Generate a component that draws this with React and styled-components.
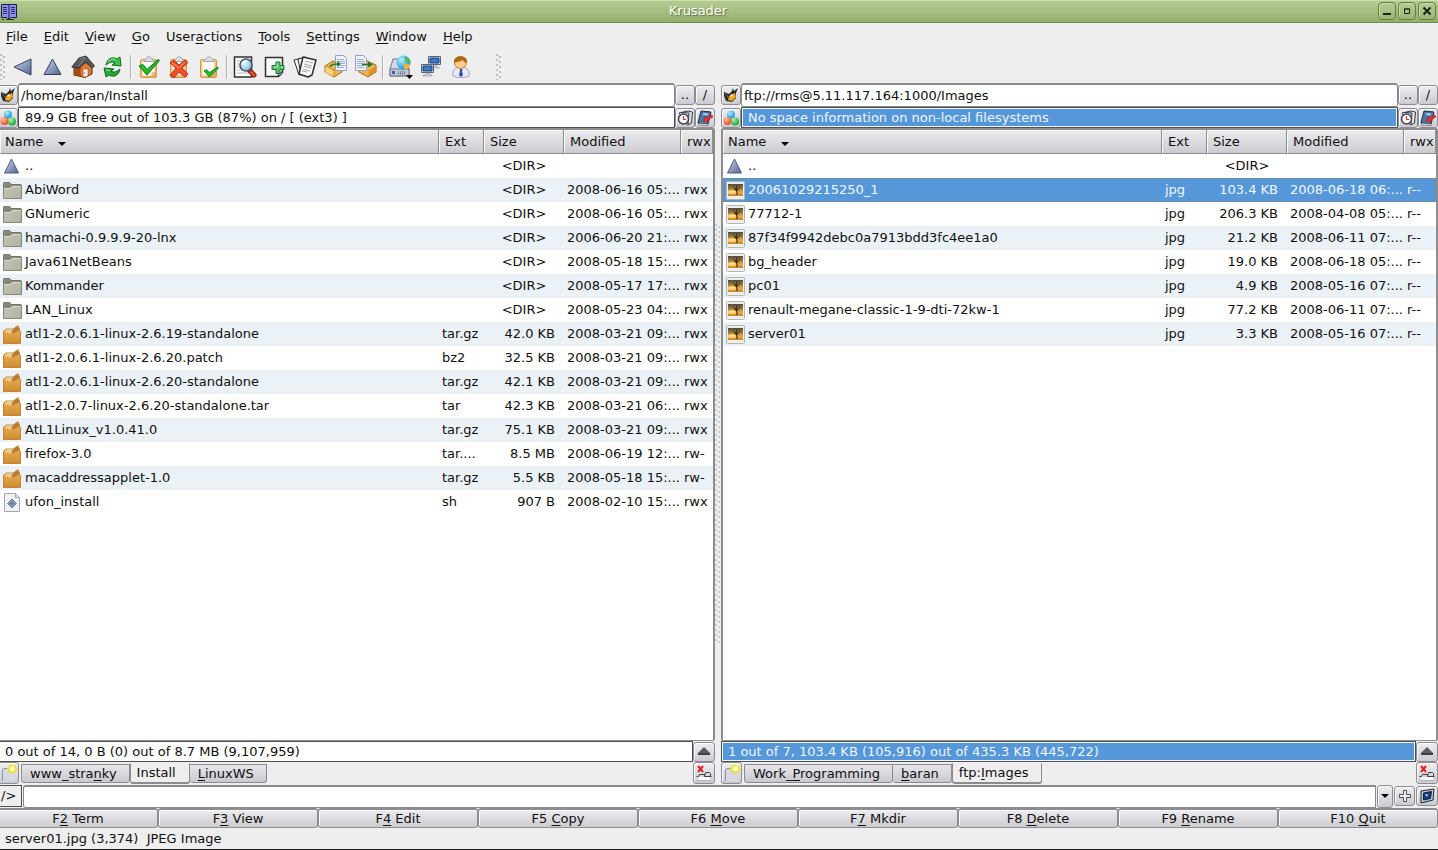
import React, { useState } from 'react';
import styled, { createGlobalStyle } from 'styled-components';

const GlobalStyle = createGlobalStyle`
* { box-sizing: border-box; }
body {
  margin: 0;
  background: #eeeeee;
  color: #101010;
  overflow-x: hidden;
}
body, button, input, table {
  font-family: "DejaVu Sans", sans-serif;
  font-size: 13px;
}
button { color: inherit; padding: 0; }
svg { display: block; }
`

const Window = styled.div`
display: flex;
flex-direction: column;
min-height: 100vh;
overflow: hidden;
border-bottom: solid 1px #202020;
`

/* title bar */

const TitleBar = styled.header`
display: flex;
align-items: center;
height: 23px;
padding: 0 2px 1px 1px;
background: linear-gradient(#b4ca92, #a6be82 50%, #93ad6c);
border-top: solid 1px #cbe0ab;
border-bottom: solid 1px #6d8a48;
color: white;
`

const Title = styled.h1`
flex: 1;
margin: 0;
font-size: 13px;
font-weight: normal;
line-height: 20px;
text-align: center;
text-shadow: 1px 1px 1px #5c7440;
`

const TitleButtons = styled.div`
display: flex;
gap: 2px;
`

const TitleButton = styled.button`
display: flex;
align-items: center;
justify-content: center;
width: 18px;
height: 18px;
border: solid 1px #66813f;
border-radius: 4px;
background: linear-gradient(#b6cb95, #9bb477);
box-shadow: inset 1px 1px 0 #c9dcae;
`

/* menu */

const MenuBar = styled.nav`
display: flex;
align-items: center;
height: 27px;
margin-left: -2px;
`

const MenuItem = styled.button`
height: 24px;
padding: 0 8px;
border: none;
background: none;
`

const Accel = styled.span`
text-decoration: underline;
text-decoration-skip-ink: none;
text-underline-offset: 2px;
`

/* toolbar */

const ToolBar = styled.div`
display: flex;
align-items: center;
height: 33px;
`

const Handle = styled.div`
width: 6px;
height: 26px;
margin-left: ${props => props.$end ? 20 : 0}px;
margin-right: 2px;
background-image:
  radial-gradient(circle at 1px 1px, #c0c0c0 1px, transparent 1px),
  radial-gradient(circle at 4px 3px, #c0c0c0 1px, transparent 1px);
background-size: 6px 5px;
`

const ToolButton = styled.button`
display: flex;
align-items: center;
justify-content: center;
width: 30px;
height: 30px;
border: none;
background: none;
`

const Separator = styled.div`
width: 6px;
height: 24px;
border-left: solid 2px transparent;
background: linear-gradient(90deg, #b0b0b0 1px, #fafafa 1px, #fafafa 2px, transparent 2px) padding-box;
`

/* panels */

const Panels = styled.main`
display: flex;
flex: 1;
margin-left: -2px;
`

const Panel = styled.section`
display: flex;
flex: 1 1 0;
flex-direction: column;
min-width: 0;
`

const Splitter = styled.div`
display: flex;
align-items: center;
width: 6px;
`

const SplitterDots = styled.div`
width: 5px;
height: 420px;
background-image:
  radial-gradient(circle at 1px 1px, #cccccc 1px, transparent 1px),
  radial-gradient(circle at 4px 3px, #cccccc 1px, transparent 1px);
background-size: 5px 5px;
`

const Row = styled.div`
display: flex;
align-items: center;
height: ${props => props.$height}px;
`

const SmallButton = styled.button`
display: flex;
flex: none;
align-items: center;
justify-content: center;
width: ${props => props.$width || 20}px;
height: ${props => props.$height || 20}px;
border: solid 1px #8c8c92;
border-radius: 3px;
background: linear-gradient(#efeff2, #dcdce1 50%, #cacad0);
box-shadow: inset 1px 1px 0 #fafafa;
line-height: 16px;
`

const LocationInput = styled.input`
flex: 1;
min-width: 0;
height: 24px;
padding: 0 2px;
border: solid 1px #8a8a8a;
border-top-width: 2px;
border-radius: 3px;
background: white;
color: #101010;
outline: none;
`

const InfoLabel = styled.div`
flex: 1;
height: 21px;
padding: 0 6px;
border: solid 1px #505050;
box-shadow: inset 0 0 0 1px ${props => props.$active ? '#f0f6fc' : 'white'};
background: ${props => props.$active ? '#5597d8' : 'white'};
color: ${props => props.$active ? '#eef6ff' : '#101010'};
line-height: 20px;
white-space: nowrap;
overflow: hidden;
`

const ListFrame = styled.div`
flex: 1;
border: solid 2px #8e8e8e;
border-bottom: solid 1px #8e8e8e;
border-radius: 2px;
background: white;
`

const FileTable = styled.table`
width: 100%;
table-layout: fixed;
border-collapse: separate;
border-spacing: 0;
`

const HeadCell = styled.th`
width: ${props => props.$width ? props.$width + 'px' : 'auto'};
height: 24px;
padding: 0 0 0 5px;
border-right: solid 1px #8e8e92;
border-bottom: solid 1px #8e8e92;
background: linear-gradient(#ececef, #dcdce0 50%, #cbcbd1);
box-shadow: inset 1px 1px 0 #f8f8fa;
font-weight: normal;
text-align: left;
white-space: nowrap;

& + & {
  padding-left: 6px;
}
`

const SortArrow = styled.span`
display: inline-block;
margin-left: 15px;
vertical-align: 0;
border: solid 4px transparent;
border-top-color: black;
border-bottom: none;
`

const FileRow = styled.tr`
background: ${props => props.$selected ? '#5597d8' : 'white'};
color: ${props => props.$selected ? '#f2f8ff' : '#101010'};
outline: ${props => props.$selected ? 'dotted 1px #8a8478' : 'none'};
outline-offset: -1px;

&:nth-child(even) {
  background: ${props => props.$selected ? '#5597d8' : '#eaf2f8'};
}
`

const Cell = styled.td`
height: 24px;
padding: ${props => props.$align === 'right' ? '0 9px 0 0' : '0 0 0 3px'};
text-align: ${props => props.$align || 'left'};
line-height: 22px;
white-space: nowrap;
overflow: hidden;
`

const DirCell = styled(Cell)`
padding: 0;
text-align: center;
`

const FileName = styled.div`
display: flex;
align-items: center;
gap: 3px;
`

const TabRow = styled.div`
display: flex;
align-items: flex-start;
height: 22px;
`

const Tabs = styled.div`
display: flex;
flex: 1;
align-items: flex-start;
padding-left: 2px;
`

const Tab = styled.button`
height: ${props => props.$active ? 21 : 19}px;
margin-top: ${props => props.$active ? 1 : 2}px;
padding: ${props => props.$active ? '0 13px 0 6px' : '0 12px 0 8px'};
border: solid 1px #8c8c90;
border-top-color: ${props => props.$active ? '#eeeeee' : '#8c8c90'};
border-bottom-width: ${props => props.$active ? 2 : 1}px;
border-left-width: ${props => props.$active ? 1 : 0}px;
border-radius: 0 0 3px 3px;
background: ${props => props.$active ? '#eeeeee' : 'linear-gradient(#e6e6ea, #c9c9d0)'};
line-height: 16px;

&:first-child {
  border-left-width: 1px;
}
`

/* command line, function keys, status bar */

const CommandLine = styled.form`
display: flex;
align-items: center;
gap: 1px;
height: 24px;
margin-left: -2px;
`

const Prompt = styled.label`
width: 24px;
height: 22px;
padding-left: 2px;
border: solid 1px #505050;
line-height: 19px;
`

const CommandInput = styled.input`
flex: 1;
min-width: 0;
height: 23px;
padding: 0 4px;
border: solid 1px #8a8a8a;
border-top-width: 2px;
border-radius: 3px 0 0 3px;
background: white;
outline: none;
`

const FunctionKeys = styled.div`
display: grid;
grid-template-columns: repeat(9, 1fr);
margin-left: -2px;
`

const FunctionKey = styled.button`
height: 20px;
border: solid 1px #8c8c92;
border-top-width: 2px;
border-radius: 3px;
background: linear-gradient(#ededf0, #dcdce0 50%, #cbcbd1);
box-shadow: inset 1px 1px 0 #fafafa;
line-height: 17px;
`

const StatusBar = styled.footer`
height: 21px;
padding-left: 5px;
line-height: 21px;
white-space: pre;
`

function Svg({ size = 22, children }) {
  return (
    <svg width={size} height={size} viewBox={`0 0 ${size} ${size}`} fill="none" aria-hidden="true">
      {children}
    </svg>
  )
}

function Gradients() {
  return (
    <svg width="0" height="0" style={{ position: 'absolute' }} aria-hidden="true">
      <defs>
        <linearGradient id="slate" x1="0" y1="0" x2="1" y2="1">
          <stop offset="0.2" stopColor="#b4c2dc" />
          <stop offset="1" stopColor="#52658f" />
        </linearGradient>
        <linearGradient id="folder" x1="0" y1="0" x2="1" y2="1">
          <stop offset="0" stopColor="#c6c7b6" />
          <stop offset="1" stopColor="#b0b29e" />
        </linearGradient>
        <linearGradient id="box" x1="0" y1="0" x2="0" y2="1">
          <stop offset="0" stopColor="#e6ad55" />
          <stop offset="1" stopColor="#cf8d30" />
        </linearGradient>
        <linearGradient id="clip" x1="0" y1="0" x2="1" y2="1">
          <stop offset="0" stopColor="#f9d898" />
          <stop offset="1" stopColor="#e8a848" />
        </linearGradient>
        <linearGradient id="sunset" x1="0" y1="0" x2="0" y2="1">
          <stop offset="0" stopColor="#4f4b40" />
          <stop offset="0.3" stopColor="#8f6f3a" />
          <stop offset="0.7" stopColor="#e8ac48" />
          <stop offset="1" stopColor="#c48428" />
        </linearGradient>
        <radialGradient id="lens" cx="0.35" cy="0.35" r="0.8">
          <stop offset="0" stopColor="#e8f6ff" />
          <stop offset="1" stopColor="#6fb4e4" />
        </radialGradient>
        <radialGradient id="blueBall" cx="0.35" cy="0.3" r="0.7">
          <stop offset="0" stopColor="#b8ecff" />
          <stop offset="1" stopColor="#149ae0" />
        </radialGradient>
        <radialGradient id="redBall" cx="0.35" cy="0.3" r="0.7">
          <stop offset="0" stopColor="#ffc0a0" />
          <stop offset="1" stopColor="#ee4a18" />
        </radialGradient>
        <radialGradient id="greenBall" cx="0.35" cy="0.3" r="0.7">
          <stop offset="0" stopColor="#b0f0a8" />
          <stop offset="1" stopColor="#18a838" />
        </radialGradient>
      </defs>
    </svg>
  )
}

const AppIcon = () => (
  <Svg size={17}>
    <path d="M.5 1.500h15v13H10l-1 1H7l-1-1H.5z" fill="#8e90ec" stroke="#1c1c50" />
    <path d="M8 2v13" stroke="#1c1c50" />
    <path d="M2 4.500h4M2 6.500h4M2 8.500h4M2 10.500h4M10 4.500h4M10 6.500h4M10 8.500h4M10 10.500h4" stroke="#2a2a78" />
    <path d="M1 16.500h2M5 16.500h8" stroke="#303030" />
  </Svg>
)

const BackIcon = () => (
  <Svg>
    <path d="M2 11L19 3v16z" fill="url(#slate)" stroke="#33405c" strokeLinejoin="round" />
  </Svg>
)

const UpIcon = () => (
  <Svg>
    <path d="M10.500 3l8.500 15.500H2z" fill="url(#slate)" stroke="#33405c" strokeLinejoin="round" />
  </Svg>
)

const HomeIcon = () => (
  <Svg size={24}>
    <path d="M3 11l9-5 9 5v8l-7 3.500L3 20z" fill="#c8611a" stroke="#6b2c08" strokeLinejoin="round" />
    <path d="M3.500 12l6-2v11.500l-6-2z" fill="#a84a10" />
    <path d="M10 12l5-4 5 4v7l-6 3-4-1z" fill="#e27a30" />
    <path d="M12 14h5v7l-3 1-2-.5z" fill="#f4f4f4" stroke="#8a3a10" strokeWidth=".5" />
    <path d="M13 18h1" stroke="#404040" />
    <path d="M.8 12L8 3l7-2 8.500 10-2.500 2-6.500-6-6 6z" fill="#585b5e" stroke="#2c2e30" strokeLinejoin="round" />
    <path d="M8.500 4l6-2-7 9" stroke="#85888b" />
  </Svg>
)

const RefreshIcon = () => (
  <Svg>
    <path d="M4 9C5 3 10 0 15 3l3-2 1 9-9-1 3-2c-3-2-5-1-9 2z" fill="#3fc24a" stroke="#0f6a1c" strokeLinejoin="round" />
    <path d="M18 13c-1 6-6 9-11 6l-3 2-2-9 10 1-3 2c3 2 5 1 9-2z" fill="#26a834" stroke="#0f6a1c" strokeLinejoin="round" />
    <path d="M6 6c2-3 5-4 8-2M4 14l4 .5" stroke="#a5ecaa" />
  </Svg>
)

const Clipboard = () => (
  <>
    <rect x="2.500" y="3.500" width="16" height="18" rx="1.500" fill="url(#clip)" stroke="#cf9a4c" />
    <path d="M4.500 6h12v10l-3 3.500h-9z" fill="#fbfbfb" />
    <path d="M16.500 16l-3 3.500V16z" fill="#c9c9c9" />
    <path d="M6 5.500C6 3.500 8 3.500 8.500 2c.5-1.500 4.500-1.500 5 0 .5 1.500 2.500 1.500 2.500 3.500z" fill="#dcdee4" stroke="#a2a4ae" />
  </>
)

const SelectIcon = () => (
  <Svg>
    <Clipboard />
    <path d="M1 10l4-1.500 4 5L20 3.500l1.500 1L9 19z" fill="#1fc01f" stroke="#0b7410" strokeLinejoin="round" />
  </Svg>
)

const UnselectIcon = () => (
  <Svg>
    <Clipboard />
    <path d="M2 7l4-3 5 5 6-5 3 2.500-6 5.500 6 6-3 3-6-5-5 6-4-2.500 6-7.500z" fill="#f2502a" stroke="#c42c10" strokeLinejoin="round" />
    <path d="M4 7l7 5 6-6" stroke="#ff9a78" />
  </Svg>
)

const InvertIcon = () => (
  <Svg>
    <Clipboard />
    <path d="M6 15l2.500-1.500 3 3L19.500 11l1 1-9 9z" fill="#1fc01f" stroke="#0b7410" strokeWidth=".8" strokeLinejoin="round" />
  </Svg>
)

const ViewIcon = () => (
  <Svg size={24}>
    <path d="M1.500 2h17v20h-17z" fill="#fcfcfc" stroke="#303030" strokeWidth="1.500" />
    <path d="M4 6h4M4 9h3M4 12h3M4 15h5M4 18h12" stroke="#b8b8b8" />
    <path d="M17 16l4 4" stroke="#7c1a10" strokeWidth="5" strokeLinecap="round" />
    <path d="M18 17l3 3" stroke="#e84a2a" strokeWidth="3" strokeLinecap="round" />
    <circle cx="13" cy="10" r="6" fill="url(#lens)" stroke="#4a5260" strokeWidth="1.500" />
    <path d="M10 9c0-2 2-3 4-3" stroke="white" strokeWidth="1.500" />
  </Svg>
)

const NewFileIcon = () => (
  <Svg>
    <path d="M1.500 1.500h17v15l-4 4h-13z" fill="#fafafa" stroke="#303030" strokeWidth="1.500" />
    <path d="M14 20c1-3 2-4 5-4" fill="#d8d8d8" stroke="#303030" />
    <path d="M12 6h4v3.500h4v4h-4v4h-4v-4H8v-4h4z" fill="#58c070" stroke="#187a34" strokeLinejoin="round" />
    <path d="M13.500 7.500v3.500h-4M17 11h2" stroke="#b0ecb8" />
  </Svg>
)

const CopyIcon = () => (
  <Svg size={24}>
    <path d="M1 5l8-2 2 14-5 3z" fill="#f4f4f4" stroke="#303030" strokeLinejoin="round" />
    <path d="M5 4l8-2 1 16-6 2z" fill="#f4f4f4" stroke="#303030" strokeLinejoin="round" />
    <path d="M10 2l13 3-4 15-4 2-9-3z" fill="#fafafa" stroke="#303030" strokeWidth="1.500" strokeLinejoin="round" />
    <path d="M12 6l8 2M11 9l8 2M11 11l7 2M10 14l7 2M9 16l5 1" stroke="#a4a4a4" />
  </Svg>
)

const PaperSheet = ({ x }) => (
  <g transform={`translate(${x} 0)`}>
    <path d="M.5.5h8l3 3v12H.5z" fill="#f0f3fd" stroke="#93a0cf" />
    <path d="M2 4.500h7M2 6.500h8M2 8.500h8M2 10.500h8M2 12.500h7" stroke="#9eaada" />
  </g>
)

const PackIcon = () => (
  <Svg size={23}>
    <path d="M1 11l8-5 9 4v7l-8 5-9-5z" fill="#f4b545" stroke="#a86a14" strokeLinejoin="round" />
    <path d="M1 11l9 4 8-5M10 15v7" stroke="#c98420" />
    <path d="M1.500 11.500l8 4v6l-8-4z" fill="#fad27a" />
    <PaperSheet x={11} />
    <path d="M6 12c1-3 4-3 8-3" stroke="#187a34" strokeWidth="1.500" />
    <path d="M13 6l4 3-4 3z" fill="#187a34" />
  </Svg>
)

const UnpackIcon = () => (
  <Svg size={23}>
    <path d="M5 11l8-5 9 4v7l-8 5-9-5z" fill="#f4b545" stroke="#a86a14" strokeLinejoin="round" />
    <path d="M14.500 15.500l7-4.500v6l-7 4.500z" fill="#dd9426" />
    <PaperSheet x={1} />
    <path d="M8 9.500h8" stroke="#187a34" strokeWidth="1.500" />
    <path d="M14 6.500l5 3-5 3z" fill="#187a34" />
  </Svg>
)

const MountIcon = () => (
  <Svg size={24}>
    <path d="M4 4h13l3 10v7H1v-7z" fill="#d3d8e2" stroke="#6c7484" strokeLinejoin="round" />
    <path d="M1 14h19v7H1z" fill="#c0c7d4" stroke="#6c7484" />
    <path d="M3 16h3v3H3z" fill="#3a62b0" />
    <path d="M9.500 16v4M11.500 16v4M13.500 16v4M15.500 16v4" stroke="#7c8698" />
    <circle cx="14.500" cy="7.500" r="7" fill="url(#blueBall)" />
    <path d="M15.500 1.500c4 1 6 4 6 7l-5-2z" fill="#48c040" />
    <path d="M14.500 8.500l7 1c-1 3-3 5-6 5z" fill="#f5b030" />
    <path d="M17 20h7l-3.500 4z" fill="black" />
  </Svg>
)

const Monitor = ({ x, y }) => (
  <g transform={`translate(${x} ${y})`}>
    <path d="M.5.5h12v8H.5z" fill="#e4e8ee" stroke="#5a6474" />
    <path d="M2 2h9v5H2z" fill="#3f78bc" stroke="#173f7c" />
    <path d="M5 9h3v2h3v1H2v-1h3z" fill="#d4d8de" stroke="#7c8492" strokeWidth=".5" />
  </g>
)

const NetworkIcon = () => (
  <Svg>
    <Monitor x={8} y={0} />
    <Monitor x={1} y={8} />
  </Svg>
)

const UserIcon = () => (
  <Svg>
    <path d="M3 20c-1-6 2-9 8-9s9 3 8 9c-4 2-12 2-16 0z" fill="#e7e9f6" stroke="#9ba1cc" />
    <path d="M10 13h2.500l-.5 2 1 4-2 2-2-2 1-4z" fill="#2c4ca8" />
    <circle cx="10.500" cy="6.500" r="6" fill="#fccb8c" stroke="#c8842c" />
    <path d="M4 7C3.500 2.500 7 .3 10.500.3S18 2.500 17 7C15 7 14 5 12.500 4 10.500 5.500 7 6 4 7z" fill="#b06818" />
  </Svg>
)

const BookmarkIcon = () => (
  <Svg size={16}>
    <path d="M1 5l5 2 3-3 1-3 1 3 4-3-2 5v5l-4 4-6-1-2-5z" fill="#2c2c2c" />
    <path d="M6 9l6-3 1 4-4 4-4-1z" fill="#f0a818" />
    <path d="M7 8l3-1-1 3z" fill="#fbfbfb" />
    <path d="M2 6l3 4" stroke="#6a6a6a" />
  </Svg>
)

const BallsIcon = () => (
  <Svg size={16}>
    <circle cx="8" cy="4.500" r="4" fill="url(#blueBall)" />
    <circle cx="4.500" cy="11" r="4" fill="url(#redBall)" />
    <circle cx="12" cy="11.500" r="4" fill="url(#greenBall)" />
  </Svg>
)

const HistoryIcon = () => (
  <Svg size={16}>
    <path d="M2 3l9-2 4.500 1-1 11-4 2z" fill="#dfe3ea" stroke="#303844" strokeLinejoin="round" />
    <path d="M5 2.500l7 .5-1 11" stroke="#303844" />
    <circle cx="6.500" cy="9" r="5" fill="#f4f6f8" stroke="#404854" strokeWidth="1.500" />
    <path d="M6.500 6v3.500H9" stroke="#e02818" />
  </Svg>
)

const BookIcon = () => (
  <Svg size={16}>
    <path d="M4 1l10 1-3 12L1 13z" fill="#4a78a8" stroke="#1c3044" strokeLinejoin="round" />
    <path d="M1 13l10 1v1.500L2 15z" fill="#f0f0f0" stroke="#303030" strokeWidth=".5" />
    <path d="M6 4l5 .5" stroke="#c8dcf0" strokeWidth="1.500" />
    <path d="M15 5l1 2-5 3 1 2-6-1 2-4 1 1z" fill="#ee3030" stroke="#a01414" strokeWidth=".5" />
  </Svg>
)

const EjectIcon = () => (
  <Svg size={16}>
    <path d="M8 3l6 6H2z" fill="#5c5c60" />
    <path d="M2 9h12v2H2z" fill="#404044" />
  </Svg>
)

const NewTabIcon = () => (
  <Svg size={18}>
    <path d="M3 17V5h12v12z" fill="#d6d9e2" />
    <path d="M2.500 17V6c0-1 .5-1.500 1.500-1.500h9" stroke="#8a93b0" />
    <path d="M12 0l1.500 2L16 1l.3 2.500L18 5l-1.700 1.500L16 9l-2.500-1L12 9.500 10 8 8 8.500 8.200 6 7 4.500l1.500-1.500L8.500.8l2.200.7z" fill="#f2e220" />
    <circle cx="12.500" cy="4.700" r="2.500" fill="#fffde0" />
  </Svg>
)

const CloseTabIcon = () => (
  <Svg size={18}>
    <path d="M3 13h12v3H3z" fill="#fafafa" />
    <path d="M1.500 12.500h2l1-2h5v2h7M9.500 12l1-3.500h4l1 1v3" stroke="#404040" />
    <path d="M2 16.500h14" stroke="#b4b4b4" />
    <path d="M3 2l5 6M8 2L3 8" stroke="#e82020" strokeWidth="2" />
  </Svg>
)

const PlusIcon = () => (
  <Svg size={14}>
    <path d="M5.500 1.500h3v4h4v3h-4v4h-3v-4h-4v-3h4z" fill="#ececee" stroke="#505054" />
  </Svg>
)

const TerminalIcon = () => (
  <Svg size={16}>
    <path d="M2 3l13-2-1 11-12 3z" fill="#c2ccd8" stroke="#182434" />
    <path d="M4.500 5l8-1.500-1 7-7 1.500z" fill="#183c80" stroke="#101c30" />
    <path d="M6 6.500l3-.5v2l-2 .5z" fill="#9cb8e8" />
  </Svg>
)

const DropIcon = () => (
  <Svg size={8}>
    <path d="M0 2h8L4 6z" fill="black" />
  </Svg>
)

const FolderIcon = () => (
  <Svg size={19}>
    <path d="M.5 2.500c0-1 0-1 1-1h5c1 0 1 1 1.500 2h10v3H.5z" fill="#85877a" stroke="#77796a" />
    <path d="M.5 6.500h6.500l2-2h9.500v13H.5z" fill="url(#folder)" stroke="#85877a" />
    <path d="M1.500 7.500h6l2-2h8" stroke="#dcddd0" />
  </Svg>
)

const ArchiveIcon = () => (
  <Svg size={19}>
    <path d="M.5 6.500L3 4h12l2.500 2.500v12H.5z" fill="url(#box)" stroke="#bf8433" strokeLinejoin="round" />
    <path d="M1.500 7l2-3H10L8.500 9z" fill="#efc688" />
    <path d="M8.500 9L10 4l5-3.500L17 5z" fill="#b87a30" />
    <path d="M10 4l5-3.500L17 5" stroke="#d69a4c" />
    <path d="M3 14.500h5" stroke="#d89a40" />
  </Svg>
)

const ScriptIcon = () => (
  <Svg size={19}>
    <path d="M1.500.5h11l4 4v14h-15z" fill="#f0f1f3" stroke="#a4a6a8" />
    <path d="M12.500.5v4h4" fill="#d8dadc" stroke="#a4a6a8" />
    <path d="M9 6l4.500 4.500L9 15l-4.500-4.500z" fill="#8a98b8" stroke="#7484a8" />
    <path d="M9 8v5M6.500 10.500h5" stroke="#64749a" />
  </Svg>
)

const ImageIcon = () => (
  <Svg size={19}>
    <rect x=".5" y=".5" width="18" height="18" rx="1" fill="#eeeeec" stroke="#b4b5b0" />
    <path d="M2 3h15v12H2z" fill="url(#sunset)" />
    <ellipse cx="6" cy="11" rx="4" ry="2" fill="#fbd678" />
    <path d="M11 14V9L7.500 6M11 9l3.500-3.500M10.500 5l.5 4M8 8l3 2" stroke="#30240f" />
  </Svg>
)

const ParentIcon = () => (
  <Svg size={19}>
    <path d="M8.500 2l7 14h-14z" fill="url(#slate)" stroke="#4c5c80" strokeLinejoin="round" />
  </Svg>
)

const icons = {
  parent: ParentIcon,
  dir: FolderIcon,
  archive: ArchiveIcon,
  script: ScriptIcon,
  image: ImageIcon,
}

const menus = ['&File', '&Edit', '&View', '&Go', 'User&actions', '&Tools', '&Settings', '&Window', '&Help']

const tools = [
  [['Back', BackIcon], ['Up', UpIcon], ['Home', HomeIcon], ['Reload', RefreshIcon]],
  [['Select group', SelectIcon], ['Unselect group', UnselectIcon], ['Invert selection', InvertIcon]],
  [['View file', ViewIcon], ['Edit new file', NewFileIcon], ['Copy', CopyIcon], ['Pack', PackIcon], ['Unpack', UnpackIcon]],
  [['MountMan', MountIcon], ['New connection', NetworkIcon], ['Profiles', UserIcon]],
]

const functionKeys = ['F&2 Term', 'F&3 View', 'F&4 Edit', 'F5 &Copy', 'F6 &Move', 'F&7 Mkdir', 'F8 &Delete', 'F9 &Rename', 'F10 &Quit']

// [type, name, ext, size, modified, permissions]
const localFiles = [
  ['parent', '..', '', '<DIR>', '', ''],
  ['dir', 'AbiWord', '', '<DIR>', '2008-06-16 05:...', 'rwx'],
  ['dir', 'GNumeric', '', '<DIR>', '2008-06-16 05:...', 'rwx'],
  ['dir', 'hamachi-0.9.9.9-20-lnx', '', '<DIR>', '2006-06-20 21:...', 'rwx'],
  ['dir', 'Java61NetBeans', '', '<DIR>', '2008-05-18 15:...', 'rwx'],
  ['dir', 'Kommander', '', '<DIR>', '2008-05-17 17:...', 'rwx'],
  ['dir', 'LAN_Linux', '', '<DIR>', '2008-05-23 04:...', 'rwx'],
  ['archive', 'atl1-2.0.6.1-linux-2.6.19-standalone', 'tar.gz', '42.0 KB', '2008-03-21 09:...', 'rwx'],
  ['archive', 'atl1-2.0.6.1-linux-2.6.20.patch', 'bz2', '32.5 KB', '2008-03-21 09:...', 'rwx'],
  ['archive', 'atl1-2.0.6.1-linux-2.6.20-standalone', 'tar.gz', '42.1 KB', '2008-03-21 09:...', 'rwx'],
  ['archive', 'atl1-2.0.7-linux-2.6.20-standalone.tar', 'tar', '42.3 KB', '2008-03-21 06:...', 'rwx'],
  ['archive', 'AtL1Linux_v1.0.41.0', 'tar.gz', '75.1 KB', '2008-03-21 09:...', 'rwx'],
  ['archive', 'firefox-3.0', 'tar....', '8.5 MB', '2008-06-19 12:...', 'rw-'],
  ['archive', 'macaddressapplet-1.0', 'tar.gz', '5.5 KB', '2008-05-18 15:...', 'rw-'],
  ['script', 'ufon_install', 'sh', '907 B', '2008-02-10 15:...', 'rwx'],
]

const remoteFiles = [
  ['parent', '..', '', '<DIR>', '', ''],
  ['image', '20061029215250_1', 'jpg', '103.4 KB', '2008-06-18 06:...', 'r--'],
  ['image', '77712-1', 'jpg', '206.3 KB', '2008-04-08 05:...', 'r--'],
  ['image', '87f34f9942debc0a7913bdd3fc4ee1a0', 'jpg', '21.2 KB', '2008-06-11 07:...', 'r--'],
  ['image', 'bg_header', 'jpg', '19.0 KB', '2008-06-18 05:...', 'r--'],
  ['image', 'pc01', 'jpg', '4.9 KB', '2008-05-16 07:...', 'r--'],
  ['image', 'renault-megane-classic-1-9-dti-72kw-1', 'jpg', '77.2 KB', '2008-06-11 07:...', 'r--'],
  ['image', 'server01', 'jpg', '3.3 KB', '2008-05-16 07:...', 'r--'],
]

// "&" marks the letter that is underlined
function Label({ text }) {
  const at = text.indexOf('&')
  if (at < 0) return text
  return (
    <span>
      {text.slice(0, at)}<Accel>{text[at + 1]}</Accel>{text.slice(at + 2)}
    </span>
  )
}

function FileList({ files, selected, onSelect }) {
  return (
    <ListFrame>
      <FileTable>
        <thead>
          <tr>
            <HeadCell>Name<SortArrow /></HeadCell>
            <HeadCell $width={45}>Ext</HeadCell>
            <HeadCell $width={80}>Size</HeadCell>
            <HeadCell $width={117}>Modified</HeadCell>
            <HeadCell $width={32}>rwx</HeadCell>
          </tr>
        </thead>
        <tbody>
          {files.map(([type, name, ext, size, modified, rwx]) => {
            const Icon = icons[type]
            const SizeCell = size === '<DIR>' ? DirCell : Cell
            return (
              <FileRow key={name} $selected={name === selected} onClick={() => onSelect(name)}>
                <Cell>
                  <FileName><Icon />{name}</FileName>
                </Cell>
                <Cell>{ext}</Cell>
                <SizeCell $align="right">{size}</SizeCell>
                <Cell>{modified}</Cell>
                <Cell>{rwx}</Cell>
              </FileRow>
            )
          })}
        </tbody>
      </FileTable>
    </ListFrame>
  )
}

function FilePanel({ path, space, files, initial, totals, tabs, current, active }) {
  const [selected, setSelected] = useState(initial)
  const [tab, setTab] = useState(current)

  return (
    <Panel>
      <Row $height={24}>
        <SmallButton aria-label="Bookmarks"><BookmarkIcon /></SmallButton>
        <LocationInput aria-label="Location" defaultValue={path} />
        <SmallButton>..</SmallButton>
        <SmallButton>/</SmallButton>
      </Row>
      <Row $height={21}>
        <SmallButton aria-label="Media"><BallsIcon /></SmallButton>
        <InfoLabel $active={active}>{space}</InfoLabel>
        <SmallButton aria-label="History"><HistoryIcon /></SmallButton>
        <SmallButton aria-label="Popular URLs"><BookIcon /></SmallButton>
      </Row>
      <FileList files={files} selected={selected} onSelect={setSelected} />
      <Row $height={21}>
        <InfoLabel $active={active}>{totals}</InfoLabel>
        <SmallButton aria-label="Open popup panel" $width={22}><EjectIcon /></SmallButton>
      </Row>
      <TabRow>
        <SmallButton aria-label="New tab" $width={21} $height={22}><NewTabIcon /></SmallButton>
        <Tabs>
          {tabs.map((name) => (
            <Tab key={name} $active={name === tab} onClick={() => setTab(name)}>
              <Label text={name} />
            </Tab>
          ))}
        </Tabs>
        <SmallButton aria-label="Close tab" $width={22} $height={22}><CloseTabIcon /></SmallButton>
      </TabRow>
    </Panel>
  )
}

export default function App() {
  return (
    <Window>
      <GlobalStyle />
      <Gradients />
      <TitleBar>
        <AppIcon />
        <Title>Krusader</Title>
        <TitleButtons>
          <TitleButton aria-label="Minimize">
            <Svg size={10}><path d="M1 8h8" stroke="#1c2410" strokeWidth="2" /></Svg>
          </TitleButton>
          <TitleButton aria-label="Maximize">
            <Svg size={10}><path d="M2.500 3h5v4.500h-5zM2 3h6" stroke="#1c2410" /></Svg>
          </TitleButton>
          <TitleButton aria-label="Close">
            <Svg size={10}><path d="M1.500 1.500l7 7M8.500 1.500l-7 7" stroke="#1c2410" strokeWidth="2" /></Svg>
          </TitleButton>
        </TitleButtons>
      </TitleBar>
      <MenuBar>
        {menus.map((menu) => (
          <MenuItem key={menu}><Label text={menu} /></MenuItem>
        ))}
      </MenuBar>
      <ToolBar>
        <Handle />
        {tools.map((group, index) => (
          <React.Fragment key={index}>
            {index > 0 && <Separator />}
            {group.map(([name, Icon]) => (
              <ToolButton key={name} aria-label={name}><Icon /></ToolButton>
            ))}
          </React.Fragment>
        ))}
        <Handle $end />
      </ToolBar>
      <Panels>
        <FilePanel
          path="/home/baran/Install"
          space="89.9 GB free out of 103.3 GB (87%) on / [ (ext3) ]"
          files={localFiles}
          totals="0 out of 14, 0 B (0) out of 8.7 MB (9,107,959)"
          tabs={['www_stra&nky', 'Install', '&LinuxWS']}
          current="Install"
        />
        <Splitter><SplitterDots /></Splitter>
        <FilePanel
          path="ftp://rms@5.11.117.164:1000/Images"
          space="No space information on non-local filesystems"
          files={remoteFiles}
          initial="20061029215250_1"
          totals="1 out of 7, 103.4 KB (105,916) out of 435.3 KB (445,722)"
          tabs={['Work_&Programming', '&baran', 'ftp:&Images']}
          current="ftp:&Images"
          active
        />
      </Panels>
      <CommandLine onSubmit={(e) => e.preventDefault()}>
        <Prompt htmlFor="command">/&gt;</Prompt>
        <CommandInput id="command" />
        <SmallButton type="button" aria-label="Command history" $width={16} $height={23}><DropIcon /></SmallButton>
        <SmallButton type="button" aria-label="Add placeholder" $width={21}><PlusIcon /></SmallButton>
        <SmallButton type="button" aria-label="Terminal" $width={22}><TerminalIcon /></SmallButton>
      </CommandLine>
      <FunctionKeys>
        {functionKeys.map((key) => (
          <FunctionKey key={key}><Label text={key} /></FunctionKey>
        ))}
      </FunctionKeys>
      <StatusBar>server01.jpg (3,374)  JPEG Image</StatusBar>
    </Window>
  )
}
